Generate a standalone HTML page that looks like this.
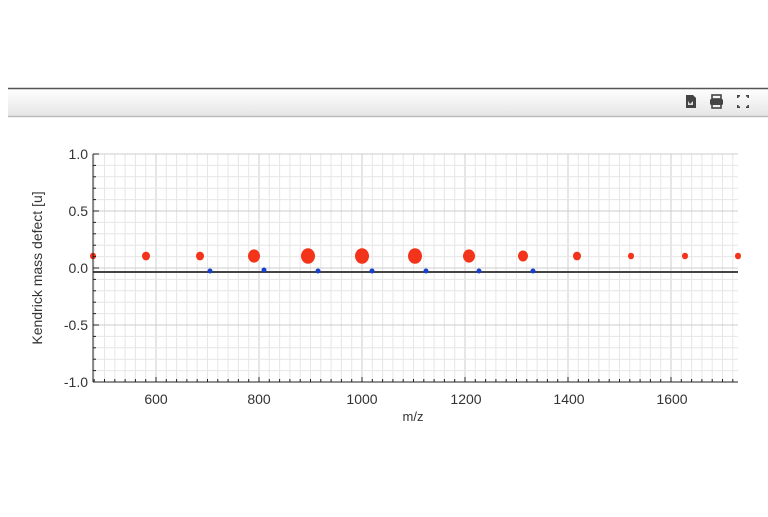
<!DOCTYPE html><html><head><style>
body{margin:0;width:768px;height:512px;background:#fff;overflow:hidden;font-family:"Liberation Sans",sans-serif}
</style></head><body>
<svg id="s" width="768" height="512" xmlns="http://www.w3.org/2000/svg" font-family="Liberation Sans, sans-serif">
<defs><linearGradient id="g" x1="0" y1="0" x2="0" y2="1"><stop offset="0" stop-color="#ffffff"/><stop offset="1" stop-color="#e6e6e6"/></linearGradient></defs>
<rect x="8" y="88" width="760" height="28" fill="url(#g)"/>
<line x1="8" y1="88.5" x2="768" y2="88.5" stroke="#555" stroke-width="1.5"/>
<line x1="8" y1="116.5" x2="768" y2="116.5" stroke="#bbb" stroke-width="1.5"/>
<g fill="#444">
<path d="M686 95h7l3 3v10h-10z"/><path d="M688 101l2 3 3-3v4h-5z" fill="#ddd"/>
<rect x="712" y="95" width="9" height="4" fill="none" stroke="#444" stroke-width="1.6"/><rect x="710" y="99" width="13" height="6" rx="1.5"/><rect x="712" y="104" width="9" height="4" fill="none" stroke="#444" stroke-width="1.6"/>
<path d="M737 95h3v1.6h-1.4v1.4h-1.6zM749 95h-3v1.6h1.4v1.4h1.6zM737 108h3v-1.6h-1.4v-1.4h-1.6zM749 108h-3v-1.6h1.4v-1.4h1.6z"/>
</g>
<g id="grid"></g>
<line x1="93" y1="272" x2="738" y2="272" stroke="#444" stroke-width="2"/>
<g id="pts"></g>
<g id="ax" stroke="#222" stroke-width="1"></g>
<g font-size="14" fill="#333" text-anchor="end">
<text x="88" y="159">1.0</text><text x="88" y="216">0.5</text><text x="88" y="273">0.0</text><text x="88" y="330">-0.5</text><text x="88" y="387">-1.0</text>
</g>
<g font-size="14" fill="#333" text-anchor="middle">
<text x="156" y="404">600</text><text x="259" y="404">800</text><text x="362" y="404">1000</text><text x="466" y="404">1200</text><text x="569" y="404">1400</text><text x="672" y="404">1600</text>
<text x="413" y="421" font-size="13">m/z</text>
<text transform="translate(42 268) rotate(-90)" font-size="14">Kendrick mass defect [u]</text>
</g>
</svg>
<script>
var ns="http://www.w3.org/2000/svg",G=document.getElementById('grid'),A=document.getElementById('ax'),P=document.getElementById('pts');
function L(p,x1,y1,x2,y2,c,w){var l=document.createElementNS(ns,'line');l.setAttribute('x1',x1);l.setAttribute('y1',y1);l.setAttribute('x2',x2);l.setAttribute('y2',y2);if(c)l.setAttribute('stroke',c);if(w)l.setAttribute('stroke-width',w);p.appendChild(l);}
function X(m){return 156+(m-600)*0.515;}
for(var m=480;m<=1730;m+=20){var x=X(m);if(x<93||x>738)continue;var maj=m%200==0;L(G,x,154,x,382,maj?'#cccccc':'#e6e6e6',1);L(A,x,382,x,maj?377:379);}
for(var i=0;i<=20;i++){var y=154+i*11.4;var maj=i%5==0;L(G,93,y,738,y,maj?'#cccccc':'#e6e6e6',1);L(A,93,y,maj?99:96,y);}
L(A,93,154,93,382);L(A,93,382,738,382);
var r=[[93,3],[146,4],[200,4],[254,6],[308,7],[362,7],[415,7],[469,6],[523,5],[577,4],[631,3],[685,3],[738,3]];
r.forEach(function(d){var c=document.createElementNS(ns,'ellipse');c.setAttribute('cx',d[0]);c.setAttribute('cy',256);c.setAttribute('rx',d[1]);c.setAttribute('ry',d[1]*1.1);c.setAttribute('fill','#f3331a');P.appendChild(c);});
[210,264,318,372,426,479,533].forEach(function(x,i){var c=document.createElementNS(ns,'circle');c.setAttribute('cx',x);c.setAttribute('cy',i==1?270:271);c.setAttribute('r',2.5);c.setAttribute('fill','#1740d0');P.appendChild(c);});
</script>
</body></html>
